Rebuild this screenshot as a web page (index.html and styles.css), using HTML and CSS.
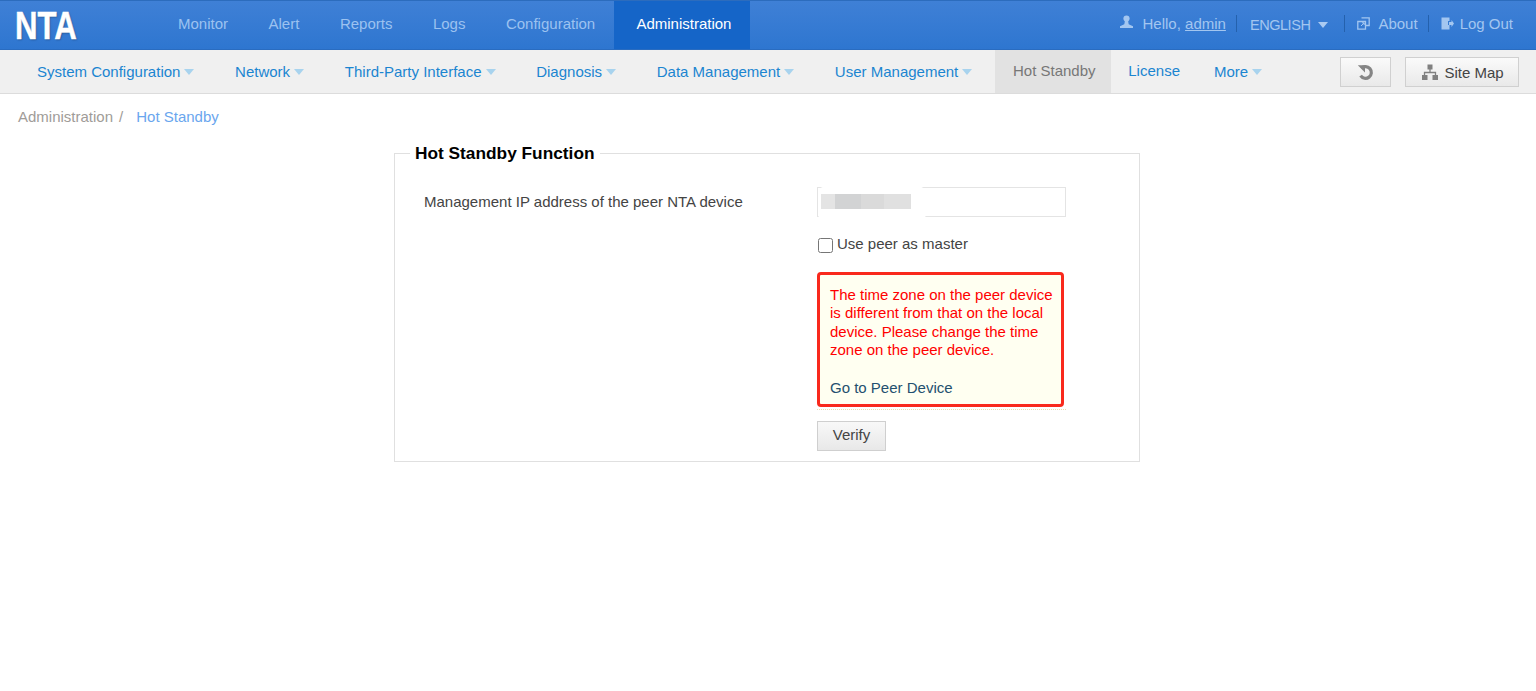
FILE: index.html
```html
<!DOCTYPE html>
<html lang="en">
<head>
<meta charset="utf-8">
<title>Hot Standby</title>
<link rel="stylesheet" href="styles.css">
</head>
<body>
<header class="topbar">
  <div class="logo"><span class="logo-text">NTA</span></div>
  <nav class="mainnav">
    <a class="mainlink m1">Monitor</a>
    <a class="mainlink m2">Alert</a>
    <a class="mainlink m3">Reports</a>
    <a class="mainlink m4">Logs</a>
    <a class="mainlink m5">Configuration</a>
    <a class="mainlink active">Administration</a>
  </nav>
  <div class="userbox">
    <svg class="icon-user" viewBox="0 0 14 14"><circle cx="7" cy="3.6" r="3.1"/><path d="M5.4 6h3.2l.6 3.2 4.3 2V13H.5v-1.800l4.300-2z"/></svg>
    <span class="hello">Hello, <u>admin</u></span>
    <span class="sep s1"></span>
    <span class="lang">ENGLISH<i class="lang-caret"></i></span>
    <span class="sep s2"></span>
    <svg class="icon-about" viewBox="0 0 13 13"><path d="M4.500.8h7.700v7.700H9M.8 4.500h7.700v7.700H.8z" fill="none" stroke="currentColor" stroke-width="1.300"/><path d="M4 9l3-3M5 5.800h2.200V8" fill="none" stroke="currentColor"/></svg>
    <span class="about">About</span>
    <span class="sep s3"></span>
    <svg class="icon-logout" viewBox="0 0 13 13"><path d="M.5.5h8v3.500H7v4h1.500v4.500h-8z"/><path d="M8 5h2.500V3L13 6.500 10.500 10V8H8z"/></svg>
    <span class="logout">Log Out</span>
  </div>
</header>
<nav class="subbar">
  <a class="sub s-sys">System Configuration<i class="caret"></i></a>
  <a class="sub s-net">Network<i class="caret"></i></a>
  <a class="sub s-third">Third-Party Interface<i class="caret"></i></a>
  <a class="sub s-diag">Diagnosis<i class="caret"></i></a>
  <a class="sub s-data">Data Management<i class="caret"></i></a>
  <a class="sub s-user">User Management<i class="caret"></i></a>
  <a class="sub current">Hot Standby</a>
  <a class="sub s-lic">License</a>
  <a class="sub s-more">More<i class="caret"></i></a>
  <button class="tool refresh" type="button" aria-label="Refresh">
    <svg viewBox="0 0 16 16" width="17" height="17"><path d="M4.100 4.100A5.500 5.500 0 1 1 3.400 11" fill="none" stroke="#858585" stroke-width="3"/><path d="M.8 1.200h6.700v6.700z" fill="#858585"/></svg>
  </button>
  <button class="tool sitemap" type="button">
    <svg viewBox="0 0 16 16" width="16" height="16"><path d="M5.500 .5h5v5h-5zM0 11h5.500v5H0zM10.500 11H16v5h-5.500z" fill="#808080"/><path d="M8 5v3.500M2.500 11V8.500h11V11" fill="none" stroke="#808080" stroke-width="1.300"/></svg>
    <span>Site Map</span>
  </button>
</nav>
<div class="crumbs"><span class="crumb-parent">Administration</span><span class="crumb-sep">/</span><span class="crumb-current">Hot Standby</span></div>
<main class="content">
  <fieldset class="panel">
    <legend>Hot Standby Function</legend>
    <div class="formgrid">
      <div class="label">Management IP address of the peer NTA device</div>
      <div class="fields">
        <div class="ipfield"><span class="mask"><span class="blur"></span></span></div>
        <label class="checkrow"><input type="checkbox"><span>Use peer as master</span></label>
        <div class="alert-wrap">
          <div class="alert">
            <p>The time zone on the peer device is different from that on the local device. Please change the time zone on the peer device.</p>
            <a class="peer">Go to Peer Device</a>
          </div>
        </div>
        <button class="verify" type="button">Verify</button>
      </div>
    </div>
  </fieldset>
</main>
</body>
</html>
```
FILE: styles.css
```css
* { box-sizing: border-box; }
html, body { margin: 0; padding: 0; }
body { background: #fff; font-family: "Liberation Sans", Arial, sans-serif; font-size: 15px; color: #444; height: 691px; overflow: hidden; }
a { text-decoration: none; }

.topbar { height: 50px; display: flex; background: linear-gradient(#3f80d6, #2e76d0); border-top: 1px solid #2c6cbd; border-bottom: 1px solid #2a6cc0; color: #a3c6f0; }
.logo { width: 154px; padding: 3px 0 0 15px; }
.logo-text { display: block; width: 80px; font-size: 39px; line-height: 44px; font-weight: bold; color: #fff; -webkit-text-stroke: .5px #fff; text-shadow: 1px 1px 2px rgba(0,0,0,.35); transform: scaleX(.8); transform-origin: 0 50%; }
.mainnav { display: flex; flex: 1; }
.mainlink { display: block; height: 48px; line-height: 45px; padding: 0 20.250px; font-size: 15px; color: #9cc2f0; }
.mainlink.m1 { padding: 0 20.250px 0 24px; }
.mainlink.active { background: #1565c8; color: #fff; padding: 0 19px 0 22px; margin-left: -1px; }
.userbox { display: flex; align-items: center; height: 44px; padding-right: 23px; font-size: 15px; color: #a3c6f0; }
.icon-user { width: 15px; height: 14px; fill: currentColor; margin: -3px 9px 0 0; }
.hello u { text-decoration: underline; }
.sep { width: 1px; height: 17px; background: #2461ad; }
.sep.s1 { margin: 0 13px 0 10px; }
.lang { margin-top: 3px; font-size: 14.500px; letter-spacing: -.450px; display: flex; align-items: center; color: #a3c6f0; }
.lang-caret { border: 5.500px solid transparent; border-top: 6px solid #a9caf2; border-bottom: 0; margin-left: 8px; }
.sep.s2 { margin: 0 12px 0 16px; }
.icon-about { width: 13px; height: 13px; margin-right: 8px; }
.sep.s3 { margin: 0 12px 0 10px; }
.icon-logout { width: 13px; height: 13px; fill: currentColor; margin-right: 6px; }

.subbar { height: 44px; display: flex; align-items: stretch; background: #f0f0f0; border-bottom: 1px solid #dcdcdc; padding-left: 37px; }
.sub { display: flex; align-items: center; font-size: 15px; color: #1b85d0; height: 43px; white-space: nowrap; }
.caret { display: inline-block; border: 5.500px solid transparent; border-top: 6px solid #a8d3ee; border-bottom: 0; margin: 1px 0 0 4px; }
.s-net, .s-third, .s-diag, .s-data, .s-user { margin-left: 40.700px; }
.sub.current { margin-left: 23px; width: 116px; justify-content: center; background: #e2e2e2; color: #777; padding: 0 0 3px 2px; }
.s-lic { margin-left: 17px; padding-bottom: 3px; }
.s-more { margin-left: 34px; }
.tool { height: 30px; margin-top: 7px; background: linear-gradient(#fafafa, #e9e9e9); border: 1px solid #d0d0d0; font: 15px "Liberation Sans", Arial, sans-serif; color: #444; display: flex; align-items: center; justify-content: center; padding: 0; }
.refresh { width: 51px; margin-left: auto; }
.sitemap { width: 114px; margin: 7px 17px 0 14px; gap: 6px; padding-left: 2px; }

.crumbs { height: 51px; padding: 15px 0 0 18px; font-size: 15px; line-height: 16px; color: #a09c98; }
.crumb-sep { margin: 0 13px 0 6px; }
.crumb-current { color: #6aa6ee; }

.content { padding-left: 394px; }
.panel { width: 746px; height: 318px; margin: 0; padding: 0; border: 1px solid #e0e0e0; position: relative; top: -1px; }
.panel legend { margin-left: 15px; padding: 0 5px; font-size: 17.300px; line-height: 18px; font-weight: bold; color: #000; }
.formgrid { display: flex; padding: 25px 0 0 29px; }
.label { width: 393px; line-height: 20px; padding-top: 4.500px; }
.fields { width: 250px; }
.ipfield { width: 249px; height: 30px; border: 1px solid #e4e4e4; padding: 0; position: relative; }
.mask { position: absolute; left: 0; top: -3px; width: 108px; height: 36px; background: #fff; border-radius: 18px / 6px; }
.blur { position: absolute; left: 3px; top: 9px; width: 90px; height: 15px; background: linear-gradient(90deg, #e4e4e4 0 16%, #d2d3d4 16% 45%, #dadada 45% 70%, #e0e0e0 70% 100%); }
.checkrow { display: flex; align-items: flex-start; margin-top: 19px; height: 20px; line-height: 16px; }
.checkrow input { width: 15px; height: 15px; margin: 2px 4px 0 1px; }
.alert-wrap { margin-top: 16px; padding-bottom: 2px; width: 249px; border-bottom: 1px dotted #ecdcae; height: 138px; }
.alert { width: 247px; height: 135px; border: 3px solid #f9291c; border-radius: 4px; background: #fffff1; padding: 10.800px 6px 0 10px; color: #f00; line-height: 18.500px; font-size: 15px; }
.alert p { margin: 0 0 19px; }
.peer { color: #24506f; display: block; }
.verify { display: block; margin-top: 11px; width: 69px; height: 30px; padding: 0 0 4px; background: linear-gradient(#f8f8f8, #e8e8e8); border: 1px solid #cfcfcf; font: 15px "Liberation Sans", Arial, sans-serif; color: #444; }
```
